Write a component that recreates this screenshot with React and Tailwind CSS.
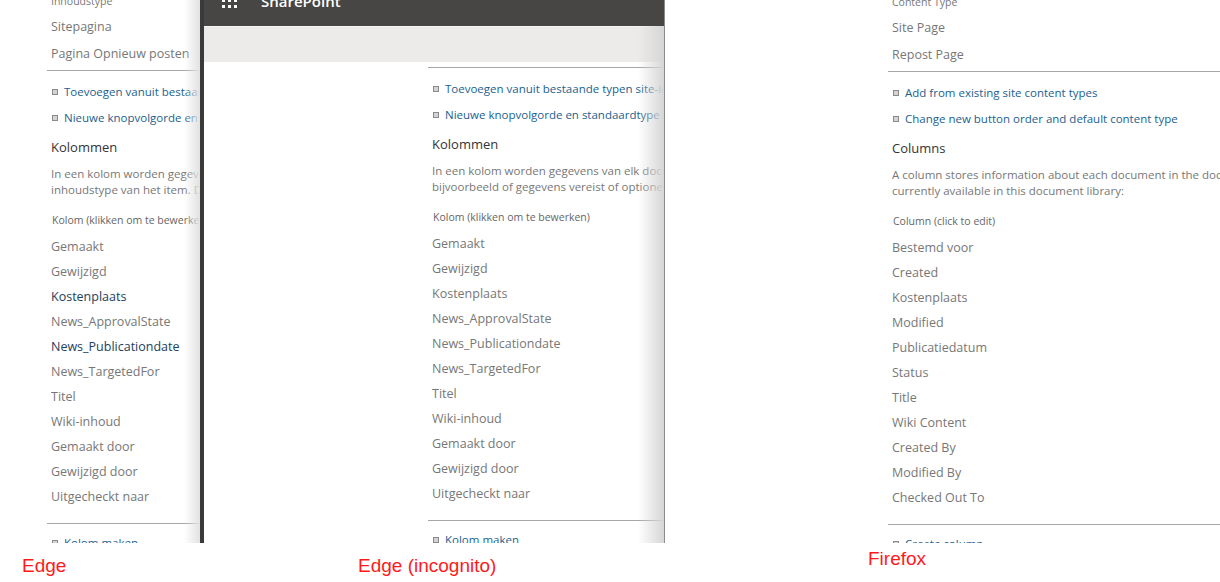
const NL = {
  header: 'Inhoudstype',
  types: ['Sitepagina', 'Pagina Opnieuw posten'],
  links: ['Toevoegen vanuit bestaande typen site-inhoud', 'Nieuwe knopvolgorde en standaardtype inhoud wijzigen'],
  title: 'Kolommen',
  colHeader: 'Kolom (klikken om te bewerken)',
  create: 'Kolom maken',
}

const EN = {
  header: 'Content Type',
  types: ['Site Page', 'Repost Page'],
  links: ['Add from existing site content types', 'Change new button order and default content type'],
  title: 'Columns',
  desc: [
    'A column stores information about each document in the document library. Because this document library allows multiple content types,',
    'currently available in this document library:',
  ],
  colHeader: 'Column (click to edit)',
  columns: [
    ['Bestemd voor'], ['Created'], ['Kostenplaats'], ['Modified'], ['Publicatiedatum'], ['Status'],
    ['Title'], ['Wiki Content'], ['Created By'], ['Modified By'], ['Checked Out To'],
  ],
  create: 'Create column',
}

const nlColumns = (visited) => [
  ['Gemaakt'],
  ['Gewijzigd'],
  ['Kostenplaats', visited],
  ['News_ApprovalState'],
  ['News_Publicationdate', visited],
  ['News_TargetedFor'],
  ['Titel'],
  ['Wiki-inhoud'],
  ['Gemaakt door'],
  ['Gewijzigd door'],
  ['Uitgecheckt naar'],
]

function Bullet() {
  return <span className="w-[6px] h-[6px] border border-[#8a8a8a] bg-[#d4d4d4] shrink-0" />
}

function LinkRow({ children, h = 'h-[26px]' }) {
  return (
    <div className={`${h} flex items-center pl-[5px] whitespace-nowrap`}>
      <Bullet />
      <span className="ml-[6px] text-[11.5px] text-[#1b5f8f]">{children}</span>
    </div>
  )
}

function TopTypes({ data }) {
  return (
    <div>
      <div className="h-[16px] -mt-[7px] leading-[16px] pl-[4px] text-[10.5px] text-[#777]">{data.header}</div>
      <div className="mt-[5px]">
        {data.types.map((t) => (
          <div key={t} className="h-[27px] flex items-center pl-[4px] text-[12.5px] text-[#777] whitespace-nowrap">
            {t}
          </div>
        ))}
      </div>
    </div>
  )
}

function Body({ data, desc, columns, lineTop = 'mt-[2px]' }) {
  return (
    <div>
      <div className={`${lineTop} border-t border-[#a6a6a6]`} />
      <div className="mt-[8px]">
        {data.links.map((l) => (
          <LinkRow key={l}>{l}</LinkRow>
        ))}
      </div>
      <div className="mt-[4px] h-[26px] flex items-center pl-[4px] text-[13px] text-[#333] whitespace-nowrap">
        {data.title}
      </div>
      <div className="mt-[5px] pl-[4px] text-[11.5px] leading-[16px] text-[#777] whitespace-nowrap">
        {desc.map((d) => (
          <div key={d}>{d}</div>
        ))}
      </div>
      <div className="mt-[13px] h-[20px] flex items-center pl-[5px] text-[10.5px] text-[#666] whitespace-nowrap">
        {data.colHeader}
      </div>
      <div className="mt-[4px]">
        {columns.map(([c, visited]) => (
          <div
            key={c}
            className={`h-[25px] flex items-center pl-[4px] text-[12.5px] whitespace-nowrap ${
              visited ? 'text-[#1d3e5c]' : 'text-[#777]'
            }`}
          >
            {c}
          </div>
        ))}
      </div>
      <div className="mt-[13px] border-t border-[#a6a6a6]" />
      <div className="mt-[8px]">
        <LinkRow h="h-[22px]">{data.create}</LinkRow>
      </div>
    </div>
  )
}

function Waffle() {
  const dots = []
  for (let r = 0; r < 3; r++) {
    for (let c = 0; c < 3; c++) {
      dots.push(<rect key={`${r}-${c}`} x={c * 6} y={r * 6} width="3" height="3" fill="#fff" />)
    }
  }
  return (
    <svg width="15" height="15" viewBox="0 0 15 15" className="shrink-0">
      {dots}
    </svg>
  )
}

export default function App() {
  return (
    <div
      className="w-[1220px] h-[582px] bg-white overflow-hidden"
      style={{ fontFamily: '"Open Sans", "Noto Sans", sans-serif' }}
    >
      <div className="flex h-[543px]">
        {/* Edge */}
        <div className="w-[200px] relative overflow-hidden pl-[47px]">
          <TopTypes data={NL} />
          <Body
            data={NL}
            columns={nlColumns(true)}
            desc={[
              'In een kolom worden gegevens van elk document in de documentbibliotheek opgeslagen.',
              'inhoudstype van het item. De volgende kolommen zijn momenteel beschikbaar in deze documentbibliotheek:',
            ]}
          />
          <div className="absolute inset-y-0 right-0 w-[16px] bg-linear-to-r from-white/0 to-[#e2e2e2]" />
        </div>

        <div className="w-[4px] bg-[#3a3a3a]" />

        {/* Edge (incognito) */}
        <div className="w-[461px] relative overflow-hidden border-r border-[#8c8c8c]">
          <div className="h-[26px] bg-[#484644] flex items-start">
            <div className="ml-[18px] -mt-[7px]">
              <Waffle />
            </div>
            <span className="ml-[24px] -mt-[7px] text-[15px] leading-[16px] font-semibold text-white">
              SharePoint
            </span>
          </div>
          <div className="h-[1px] bg-[#f6f6f6]" />
          <div className="h-[35px] bg-[#edebe9]" />
          <div className="pl-[224px]">
            <Body
              data={NL}
              columns={nlColumns(false)}
              lineTop="mt-[5px]"
              desc={[
                'In een kolom worden gegevens van elk document in de documentbibliotheek opgeslagen. Omdat deze',
                'bijvoorbeeld of gegevens vereist of optioneel zijn voor een kolom, nu opgegeven door het inhoudstype',
              ]}
            />
          </div>
          <div className="absolute top-[26px] bottom-0 right-0 w-[26px] bg-linear-to-r from-white/0 to-[#d6d6d6]" />
        </div>

        {/* Firefox */}
        <div className="flex-1 overflow-hidden pl-[223px] pt-[1px]">
          <TopTypes data={EN} />
          <Body data={EN} columns={EN.columns} desc={EN.desc} />
        </div>
      </div>

      <div
        className="flex pl-[22px] text-[19px] leading-[24px] text-[#ff1a1a]"
        style={{ fontFamily: '"Liberation Sans", Arial, sans-serif' }}
      >
        <div className="w-[336px] mt-[11px]">Edge</div>
        <div className="w-[510px] mt-[11px]">Edge (incognito)</div>
        <div className="mt-[4px]">Firefox</div>
      </div>
    </div>
  )
}
